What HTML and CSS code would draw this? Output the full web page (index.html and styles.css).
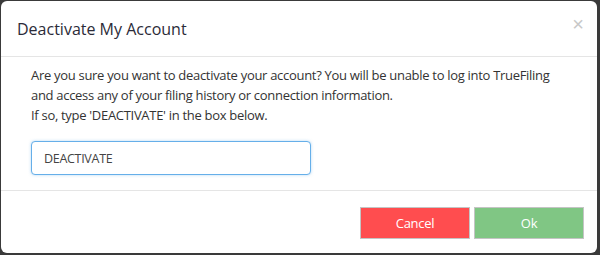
FILE: index.html
```html
<!DOCTYPE html>
<html lang="en">
<head>
  <meta charset="UTF-8">
  <title>Deactivate My Account</title>
  <link rel="stylesheet" href="styles.css">
</head>
<body>
  <div class="modal">
    <div class="modal-header">
      <h4 class="modal-title">Deactivate My Account</h4>
      <button class="close" type="button">&times;</button>
    </div>
    <div class="modal-body">
      <p>Are you sure you want to deactivate your account? You will be unable to log into TrueFiling
        and access any of your filing history or connection information.<br>
        If so, type 'DEACTIVATE' in the box below.</p>
      <input type="text" class="confirm-input" value="DEACTIVATE">
    </div>
    <div class="modal-footer">
      <button class="btn btn-cancel" type="button">Cancel</button>
      <button class="btn btn-ok" type="button">Ok</button>
    </div>
  </div>
</body>
</html>
```

FILE: styles.css
```css
* {
  margin: 0;
  padding: 0;
  box-sizing: border-box;
}

body {
  font-family: 'Open Sans', 'Noto Sans', sans-serif;
  background: #3a3a3a;
  padding: 1px 3px 2px 1px;
  height: 255px;
}

.modal {
  background: #fff;
  border-radius: 6px;
  height: 252px;
  display: flex;
  flex-direction: column;
}

.modal-header {
  height: 56px;
  display: flex;
  align-items: center;
  justify-content: space-between;
  padding: 0 16px;
  border-bottom: 1px solid #e5e5e5;
}

.modal-title {
  font-size: 16px;
  font-weight: 400;
  color: #2b2b38;
}

.close {
  background: none;
  border: none;
  font-size: 20px;
  line-height: 1;
  color: #c8c8c8;
  cursor: pointer;
  margin-right: -3px;
  margin-top: -9px;
  font-family: 'Liberation Sans', sans-serif;
}

.modal-body {
  height: 134px;
  padding: 8px 30px 0;
  border-bottom: 1px solid #e5e5e5;
}

.modal-body p {
  font-size: 13px;
  line-height: 20px;
  letter-spacing: -0.3px;
  color: #333;
  margin-bottom: 16px;
}

.confirm-input {
  width: 280px;
  height: 34px;
  padding: 0 12px;
  font-family: inherit;
  font-size: 12.5px;
  letter-spacing: -0.3px;
  color: #444;
  border: 1px solid #66afe9;
  border-radius: 4px;
  box-shadow: 0 0 3px rgba(102, 175, 233, 0.5);
  outline: none;
}

.modal-footer {
  flex: 1;
  display: flex;
  justify-content: flex-end;
  gap: 4px;
  padding: 16px 13px 0;
}

.btn {
  width: 110px;
  height: 32px;
  border: 1px solid #c4c4c4;
  font-family: inherit;
  font-size: 13px;
  letter-spacing: -0.3px;
  color: #fff;
  cursor: pointer;
}

.btn-cancel {
  background: #ff4d4f;
}

.btn-ok {
  background: #80c684;
}
```
